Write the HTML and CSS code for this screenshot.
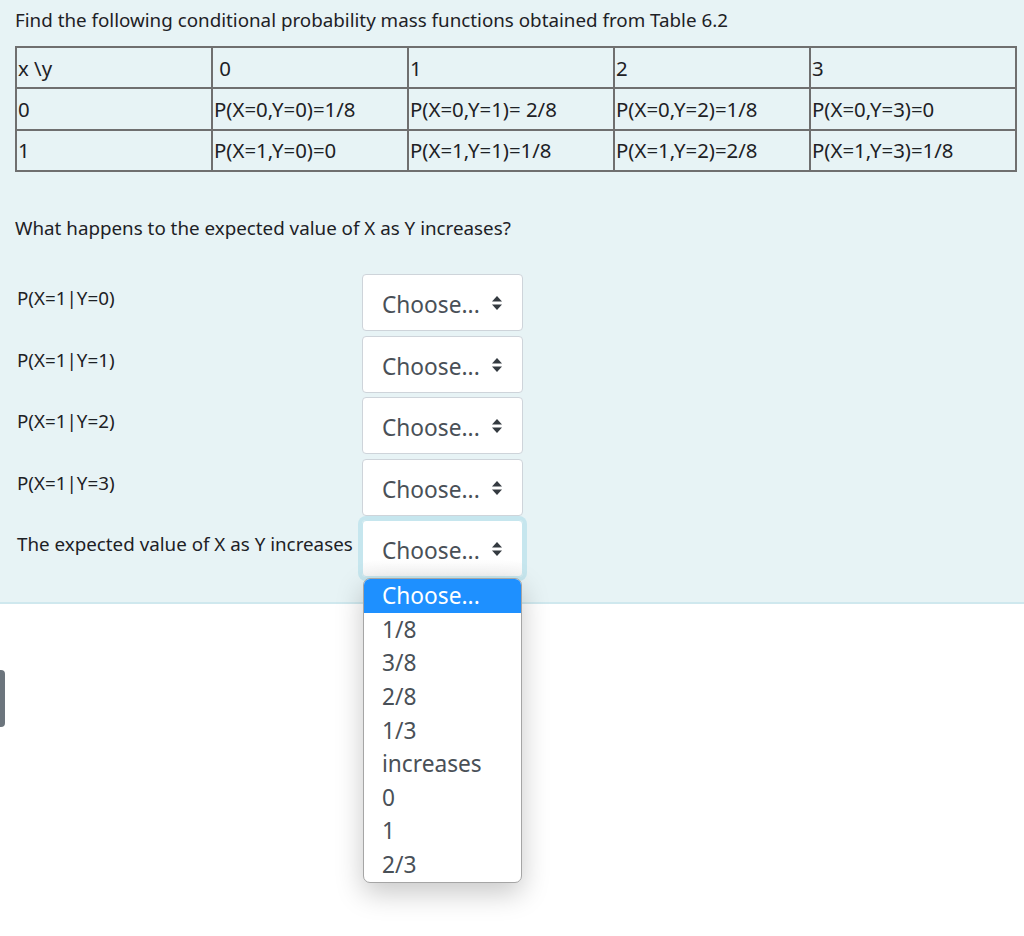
FILE: index.html
```html
<!DOCTYPE html>
<html>
<head>
<meta charset="utf-8">
<link rel="stylesheet" href="styles.css">
</head>
<body>
<div class="que">
  <p class="intro">Find the following conditional probability mass functions obtained from Table 6.2</p>
  <table class="pmf">
    <tr><td class="c1">x \y</td><td class="c2">&nbsp;0</td><td class="c3">1</td><td class="c4">2</td><td class="c5">3</td></tr>
    <tr><td>0</td><td>P(X=0,Y=0)=1/8</td><td>P(X=0,Y=1)= 2/8</td><td>P(X=0,Y=2)=1/8</td><td>P(X=0,Y=3)=0</td></tr>
    <tr><td>1</td><td>P(X=1,Y=0)=0</td><td>P(X=1,Y=1)=1/8</td><td>P(X=1,Y=2)=2/8</td><td>P(X=1,Y=3)=1/8</td></tr>
  </table>
  <p class="question">What happens to the expected value of X as Y increases?</p>
  <div class="answers">
    <div class="row"><div class="label">P(X=1|Y=0)</div><div class="select"><span>Choose...</span><svg class="arr" viewBox="0 0 10 14" width="10" height="14"><polygon points="5,0 10,5.5 0,5.5" /><polygon points="0,8.5 10,8.5 5,14" /></svg></div></div>
    <div class="row"><div class="label">P(X=1|Y=1)</div><div class="select"><span>Choose...</span><svg class="arr" viewBox="0 0 10 14" width="10" height="14"><polygon points="5,0 10,5.5 0,5.5" /><polygon points="0,8.5 10,8.5 5,14" /></svg></div></div>
    <div class="row"><div class="label">P(X=1|Y=2)</div><div class="select"><span>Choose...</span><svg class="arr" viewBox="0 0 10 14" width="10" height="14"><polygon points="5,0 10,5.5 0,5.5" /><polygon points="0,8.5 10,8.5 5,14" /></svg></div></div>
    <div class="row"><div class="label">P(X=1|Y=3)</div><div class="select"><span>Choose...</span><svg class="arr" viewBox="0 0 10 14" width="10" height="14"><polygon points="5,0 10,5.5 0,5.5" /><polygon points="0,8.5 10,8.5 5,14" /></svg></div></div>
    <div class="row"><div class="label">The expected value of X as Y increases</div>
      <div class="selwrap">
        <div class="select focus"><span>Choose...</span><svg class="arr" viewBox="0 0 10 14" width="10" height="14"><polygon points="5,0 10,5.5 0,5.5" /><polygon points="0,8.5 10,8.5 5,14" /></svg></div>
        <ul class="dropdown">
          <li class="sel">Choose...</li>
          <li>1/8</li>
          <li>3/8</li>
          <li>2/8</li>
          <li>1/3</li>
          <li>increases</li>
          <li>0</li>
          <li>1</li>
          <li>2/3</li>
        </ul>
      </div>
    </div>
  </div>
</div>
<div class="sidetab"></div>
</body>
</html>
```
FILE: styles.css
```css
html, body {
  margin: 0;
  padding: 0;
  background: #ffffff;
}
body {
  font-family: "Noto Sans", "Open Sans", sans-serif;
  color: #1d2125;
  font-size: 18.8px;
  position: relative;
  height: 936px;
  overflow: hidden;
}
.que {
  background: #e7f3f5;
  border-bottom: 2px solid #cfe8ee;
  height: 604px;
  box-sizing: border-box;
  padding: 8px 6px 0 15px;
}
.intro {
  margin: 0;
  line-height: 25px;
  white-space: nowrap;
}
.pmf {
  margin-top: 13px;
  border-collapse: collapse;
  width: 1002px;
  table-layout: fixed;
  font-size: 20.4px;
}
.pmf td {
  border: 2px solid #6f6f6f;
  padding: 0 0 0 1px;
  height: 39.4px;
  line-height: 24px;
  vertical-align: middle;
  white-space: nowrap;
}
.c1 { width: 193px; }
.c2 { width: 193px; }
.c3 { width: 203px; }
.c4 { width: 193px; }
.question {
  margin: 44px 0 0 0;
  line-height: 25px;
}
.answers {
  margin-top: 33px;
  display: flex;
  flex-direction: column;
  gap: 4.5px;
}
.row {
  display: grid;
  grid-template-columns: 347px 161px;
}
.label {
  padding: 12px 0 0 2px;
  line-height: 25px;
  white-space: nowrap;
}
.selwrap {
  position: relative;
}
.select {
  box-sizing: border-box;
  width: 161px;
  height: 57px;
  border: 1px solid #ced4da;
  border-radius: 4px;
  background: #ffffff;
  display: flex;
  align-items: center;
  justify-content: space-between;
  padding: 4px 20px 0 19px;
  font-size: 22.7px;
  color: #495057;
}
.select.focus {
  box-shadow: 0 0 0 4px #c6e6ee;
  border-color: #c6e6ee;
  background: linear-gradient(#ffffff 70%, #f5f5f5);
}
.arr {
  fill: #343a40;
  margin-top: -3px;
  flex: none;
}
.dropdown {
  position: absolute;
  left: 1px;
  top: 58px;
  width: 159px;
  box-sizing: border-box;
  margin: 0;
  padding: 0;
  list-style: none;
  background: #ffffff;
  border: 1px solid #a5a5a5;
  border-radius: 7px;
  overflow: hidden;
  box-shadow: 0 10px 28px rgba(0, 0, 0, 0.22);
  font-size: 22.7px;
  color: #495057;
}
.dropdown li {
  height: 33.6px;
  line-height: 33.6px;
  padding-left: 18px;
}
.dropdown li.sel {
  background: #1e90ff;
  color: #ffffff;
}
.sidetab {
  position: absolute;
  left: 0;
  top: 670px;
  width: 5px;
  height: 57px;
  background: #6c757d;
  border-radius: 0 4px 4px 0;
}
```
